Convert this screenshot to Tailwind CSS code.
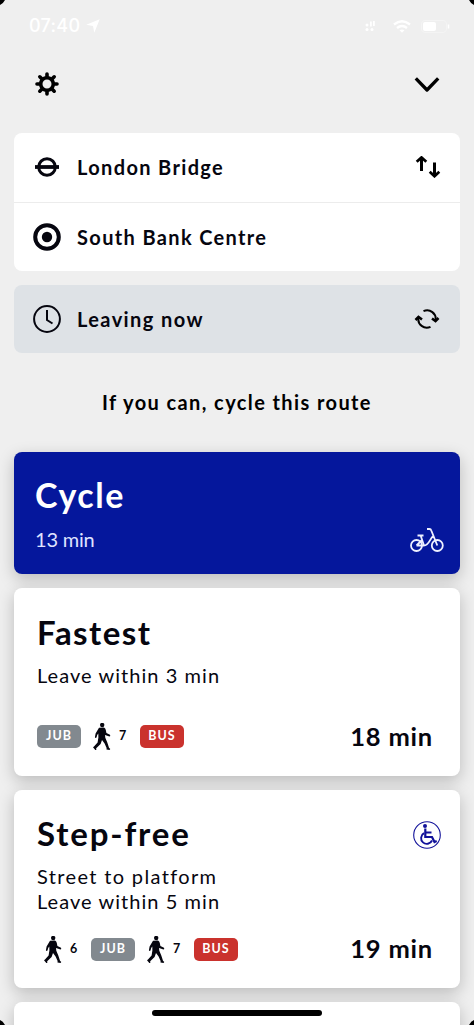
<!DOCTYPE html>
<html lang="en">
<head>
<meta charset="utf-8">
<title>Journey planner</title>
<script src="https://cdn.jsdelivr.net/npm/@tailwindcss/browser@4"></script>
</head>
<body class="bg-[#efefef]">
<svg class="hidden">
  <symbol id="walk" viewBox="0 0 18 27">
    <circle cx="9.200" cy="2" r="2.200"/>
    <path d="M6 4.800L11 4.500Q12.500 5 12.800 7L13.400 10L17 11.800Q17.800 13.200 16.500 13.600L12 12L12.300 14.700L14.300 19.500L16 24.800L17.300 26L16.500 27L13.500 26.600L13.600 25L11.600 20.500L9 17L7.600 21L3.200 25.300L3.300 27L2.300 26.900L0 24.300L1 23.600L4.600 19.500L5.400 14.500L5.300 10.500L4.200 12L3.500 14.600Q2.300 15.500 1.900 14.200L2.600 10.400Z"/>
  </symbol>
</svg>
<div class="relative flex h-[1025px] w-[474px] flex-col overflow-hidden bg-[#efefef] px-3.5 font-['Lato','Liberation_Sans',sans-serif] text-[#06060f]">
  <header class="flex h-[52px] shrink-0 items-center justify-between pr-2.5 pl-[15px] text-white">
    <div class="flex items-center gap-1.5">
      <span class="font-['Inter',sans-serif] text-[18px] leading-none font-medium tracking-[0.3px]">07:40</span>
      <svg class="h-[14px] w-[14px]" viewBox="0 0 14 14" fill="currentColor"><path d="M13.700 .3L8.300 13.700L7 7L.3 5.700Z"/></svg>
    </div>
    <div class="flex items-center gap-2.5">
      <svg class="mr-2 h-3 w-[10px]" viewBox="0 0 10 12" fill="currentColor"><circle cx="2" cy="5" r="1.500"/><circle cx="2" cy="9.500" r="1.500"/><rect x="5" y="1.500" width="1.800" height="5"/><rect x="8" y="1" width="1.800" height="5"/><circle cx="7" cy="9.500" r="1.500"/></svg>
      <svg class="h-[13px] w-[18px]" viewBox="0 0 18 13" fill="none" stroke="currentColor" stroke-width="2.300"><path d="M1 4.500Q9-2 17 4.500M4 8Q9 4 14 8"/><path d="M6.500 10.300Q9 8.500 11.500 10.300L9 12.800Z" fill="currentColor" stroke="none"/></svg>
      <svg class="h-[13px] w-[29px]" viewBox="0 0 29 13" fill="none"><rect x=".5" y=".5" width="25" height="12" rx="3.500" stroke="#f4f4f4"/><rect x="2" y="2" width="13" height="9" rx="2" fill="currentColor"/><path d="M27.500 4.500v4" stroke="currentColor" stroke-width="1.500"/></svg>
    </div>
  </header>
  <nav class="flex h-[63px] shrink-0 items-center justify-between pr-5 pl-[21px] text-black">
    <svg class="h-6 w-6" viewBox="-12 -12 24 24" fill="none" stroke="currentColor"><circle r="6.300" stroke-width="3.600"/><path d="M0-7V-10M0 7V10M-7 0H-10M7 0H10M-5-5L-7.200-7.200M5-5L7.200-7.200M-5 5L-7.200 7.200M5 5L7.200 7.200" stroke-width="3.600" stroke-linecap="round"/></svg>
    <svg class="mt-[3px] h-[16px] w-[26px]" viewBox="0 0 26 16" fill="none" stroke="currentColor" stroke-width="3.300"><path d="M1.800 1.300L13 13L24.200 1.300" stroke-linejoin="round"/></svg>
  </nav>
  <section class="mt-[18px] h-[138px] shrink-0 rounded-lg bg-white text-[20px] font-bold">
    <div class="flex h-[69px] items-center pr-[19px] pb-0.5 pl-[19px]">
      <svg class="h-7 w-7" viewBox="-14 -14 28 28" fill="none" stroke="currentColor"><circle r="8.300" stroke-width="3"/><path d="M-12 0H12" stroke-width="3.800"/></svg>
      <span class="ml-4 flex-1 tracking-[1.350px]">London Bridge</span>
      <svg class="h-[22px] w-[26px]" viewBox="0 0 26 22" fill="none" stroke="#000" stroke-width="3"><path d="M6.500 15V2M19.500 6.500V19.500" /><path d="M1.700 5.800L6.500 1.500L11.300 5.800M14.700 15.800L19.500 20.200L24.300 15.800" stroke-width="2.800"/></svg>
    </div>
    <div class="flex h-[69px] items-center border-t border-[#ececec] pb-px pl-[19px]">
      <svg class="h-7 w-7" viewBox="-14 -14 28 28"><circle r="11.800" fill="none" stroke="currentColor" stroke-width="4"/><circle r="5.200" fill="currentColor"/></svg>
      <span class="ml-4 tracking-[1.350px]">South Bank Centre</span>
    </div>
  </section>
  <section class="mt-3.5 flex h-[68px] shrink-0 items-center rounded-lg bg-[#dee2e6] pr-5 pl-[19px] text-[20px] font-bold">
    <svg class="h-7 w-7" viewBox="-14 -14 28 28" fill="none" stroke="currentColor" stroke-width="2"><circle r="12.900"/><path d="M0-9V1L5.500 4.500"/></svg>
    <span class="ml-4 flex-1 tracking-[1.400px]">Leaving now</span>
    <svg class="h-5 w-[26px]" viewBox="-13 -10 26 20" fill="none" stroke="#000" stroke-width="2"><path d="M-3.500-7.800A8.500 8.500 0 0 1 8.500 1.500M3.500 7.800A8.500 8.500 0 0 1-8.500-1.500"/><path d="M5-.5L8.500 2L11.500-1M-5 .5L-8.500-2L-11.500 1" stroke-width="2.600"/></svg>
  </section>
  <h1 class="mt-[33px] h-8 shrink-0 text-center text-[20px] leading-8 font-bold tracking-[1.400px] text-black">If you can, cycle this route</h1>
  <section class="mt-[34px] flex h-[122px] shrink-0 justify-between rounded-lg bg-[#05179c] pr-4 pl-[21px] text-white shadow-[0_5px_16px_rgba(0,0,0,0.22)]">
    <div>
      <h2 class="mt-[23px] text-[34px] leading-[40px] font-bold tracking-[1.500px]">Cycle</h2>
      <p class="mt-[12px] text-[20px] leading-6 tracking-[-0.2px] text-[#dfe3ff]">13 min</p>
    </div>
    <svg class="mt-[76px] h-6 w-[34px]" viewBox="0 0 34 24" fill="none" stroke="#eef0ff" stroke-width="1.800"><circle cx="6.500" cy="17.500" r="5.500"/><circle cx="27.300" cy="17.500" r="5.500"/><path d="M6.500 17.500H13.500M7.500 7.500H13.500M10.800 8L14 17.500M6.500 17.500L11.500 12.500M13.500 17.500C19 18 20 10 23.300 8M17 1H19.500Q20.800 1 21.300 2.500L27.300 17.500"/></svg>
  </section>
  <section class="mt-3.5 flex h-[188px] shrink-0 flex-col rounded-lg bg-white pr-[27px] pl-[23px] shadow-[0_5px_16px_rgba(0,0,0,0.22)]">
    <h2 class="mt-[24px] text-[33px] leading-[40px] font-bold tracking-[1.450px]">Fastest</h2>
    <p class="mt-[11px] text-[20px] leading-6 tracking-[1.050px]">Leave within 3 min</p>
    <div class="mt-[29px] flex h-10 items-center text-[12.500px] font-bold">
      <span class="flex h-[23px] w-[44px] items-center justify-center rounded-[5px] bg-[#82898f] pt-px tracking-[1px] text-white">JUB</span>
      <svg class="ml-3 h-[27px] w-[18px]" fill="currentColor"><use href="#walk"/></svg>
      <span class="ml-2 w-[21px]">7</span>
      <span class="flex h-[23px] w-[44px] items-center justify-center rounded-[5px] bg-[#ca322d] pt-px tracking-[1px] text-white">BUS</span>
      <strong class="ml-auto text-[25.500px] leading-[30px] font-bold tracking-[0.8px]">18 min</strong>
    </div>
  </section>
  <section class="mt-3.5 flex h-[198px] shrink-0 flex-col rounded-lg bg-white pr-[27px] pl-[23px] shadow-[0_5px_16px_rgba(0,0,0,0.22)]">
    <div class="-mr-2 flex items-center justify-between pt-[23px]">
      <h2 class="text-[33px] leading-[40px] font-bold tracking-[1.850px]">Step-free</h2>
      <svg class="mt-1 h-7 w-7" viewBox="-14 -14 28 28" fill="none" stroke="#12129a" stroke-width="2"><circle r="13.300" stroke-width="1.100"/><circle cx="-2" cy="-9" r="2" fill="#12129a" stroke="none"/><path d="M-1.700-6.500V2H5L7.500 7L9.700 6M-1.500-2.500H4.500" stroke-width="2.200"/><path d="M-3-1.800A5.700 5.700 0 1 0 5 5.500" stroke-width="1.900"/></svg>
    </div>
    <p class="mt-[11px] text-[20px] leading-[24.500px] tracking-[1.050px]"><span class="tracking-[1.350px]">Street to platform</span><br>Leave within 5 min</p>
    <div class="mt-[16px] flex h-10 items-center pl-[7px] text-[12.500px] font-bold">
      <svg class="h-[27px] w-[18px]" fill="currentColor"><use href="#walk"/></svg>
      <span class="ml-2 w-[21px]">6</span>
      <span class="flex h-[23px] w-[44px] items-center justify-center rounded-[5px] bg-[#82898f] pt-px tracking-[1px] text-white">JUB</span>
      <svg class="ml-3 h-[27px] w-[18px]" fill="currentColor"><use href="#walk"/></svg>
      <span class="ml-2 w-[21px]">7</span>
      <span class="flex h-[23px] w-[44px] items-center justify-center rounded-[5px] bg-[#ca322d] pt-px tracking-[1px] text-white">BUS</span>
      <strong class="ml-auto text-[25.500px] leading-[30px] font-bold tracking-[0.8px]"><span class="-mt-0.5 block">19 min</span></strong>
    </div>
  </section>
  <section class="mt-3.5 h-[60px] shrink-0 rounded-lg bg-white shadow-[0_5px_16px_rgba(0,0,0,0.22)]"></section>
  <div class="absolute bottom-[9px] left-[152px] h-[6px] w-[170px] rounded-full bg-black"></div>
  <svg class="absolute inset-0 h-full w-full" viewBox="0 0 474 1025"><path d="M0 0H5Q3 4 0 5ZM474 0H469Q471 4 474 5ZM0 1025H5Q3 1021 0 1020ZM474 1025H469Q471 1021 474 1020Z"/></svg>
</div>
</body>
</html>
